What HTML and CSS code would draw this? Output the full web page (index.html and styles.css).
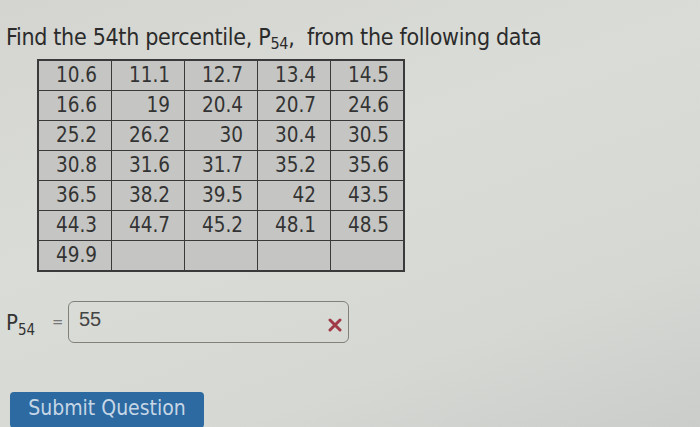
FILE: index.html
```html
<!DOCTYPE html>
<html>
<head>
<meta charset="utf-8">
<link rel="stylesheet" href="styles.css">
</head>
<body>
<div class="page">
  <p class="question">Find the 54th percentile, P<sub>54</sub>,&nbsp; from the following data</p>
  <table class="data">
    <tr><td>10.6</td><td>11.1</td><td>12.7</td><td>13.4</td><td>14.5</td></tr>
    <tr><td>16.6</td><td>19</td><td>20.4</td><td>20.7</td><td>24.6</td></tr>
    <tr><td>25.2</td><td>26.2</td><td>30</td><td>30.4</td><td>30.5</td></tr>
    <tr><td>30.8</td><td>31.6</td><td>31.7</td><td>35.2</td><td>35.6</td></tr>
    <tr><td>36.5</td><td>38.2</td><td>39.5</td><td>42</td><td>43.5</td></tr>
    <tr><td>44.3</td><td>44.7</td><td>45.2</td><td>48.1</td><td>48.5</td></tr>
    <tr><td>49.9</td><td></td><td></td><td></td><td></td></tr>
  </table>
  <div class="answer">
    <span class="label">P<sub>54</sub></span>
    <span class="eq">=</span>
    <div class="input">
      <span class="value">55</span>
      <svg class="mark" width="14" height="14" viewBox="0 0 14 14"><path d="M2 2 L12 12 M12 2 L2 12" stroke="#a13a47" stroke-width="3" stroke-linecap="round"/></svg>
    </div>
  </div>
  <button class="submit">Submit Question</button>
</div>
</body>
</html>
```
FILE: styles.css
```css
html, body {
  margin: 0;
  padding: 0;
  height: 100%;
}
body {
  background: linear-gradient(160deg, #d4d5d0 0%, #dadcd7 40%, #d6d8d4 75%, #cbcdca 100%);
  font-family: "DejaVu Sans Condensed", "DejaVu Sans", sans-serif;
  color: #2b2b2b;
  overflow: hidden;
}
.page {
  padding: 23px 0 0 6px;
}
.question {
  margin: 0;
  font-size: 23px;
  line-height: 28px;
  letter-spacing: -0.3px;
}
.question sub {
  font-size: 16px;
  vertical-align: -4px;
  line-height: 0;
}
.data {
  margin: 8px 0 0 31px;
  border-collapse: collapse;
  background: #c5c6c3;
  border: 2px solid #3a3a3a;
}
.data td {
  border: 1.5px solid #3a3a3a;
  width: 58px;
  height: 29px;
  padding: 0 14px 0 0;
  text-align: right;
  font-size: 20.5px;
  line-height: 29px;
  color: #333;
}
.answer {
  display: flex;
  align-items: center;
  margin-top: 28px;
  height: 44px;
}
.label {
  font-size: 22px;
  color: #333;
  width: 46px;
}
.label sub {
  font-size: 15px;
  vertical-align: -5px;
  line-height: 0;
}
.eq {
  font-size: 15px;
  color: #777;
  width: 16px;
}
.input {
  display: flex;
  align-items: center;
  justify-content: space-between;
  width: 281px;
  height: 42px;
  box-sizing: border-box;
  border: 1.5px solid #818179;
  border-radius: 6px;
  padding: 0 6px 0 10px;
}
.value {
  font-family: "Liberation Sans", Arial, sans-serif;
  font-size: 20px;
  color: #444;
  margin-top: -6px;
}
.mark {
  margin-top: 6px;
}
.submit {
  display: block;
  margin: 48px 0 0 4px;
  width: 194px;
  height: 36px;
  border: none;
  border-radius: 4px;
  background: #2c6aa1;
  color: #c7d6e6;
  font-family: "DejaVu Sans Condensed", "DejaVu Sans", sans-serif;
  font-size: 21px;
  padding: 0 0 4px 0;
  text-align: center;
}
```
